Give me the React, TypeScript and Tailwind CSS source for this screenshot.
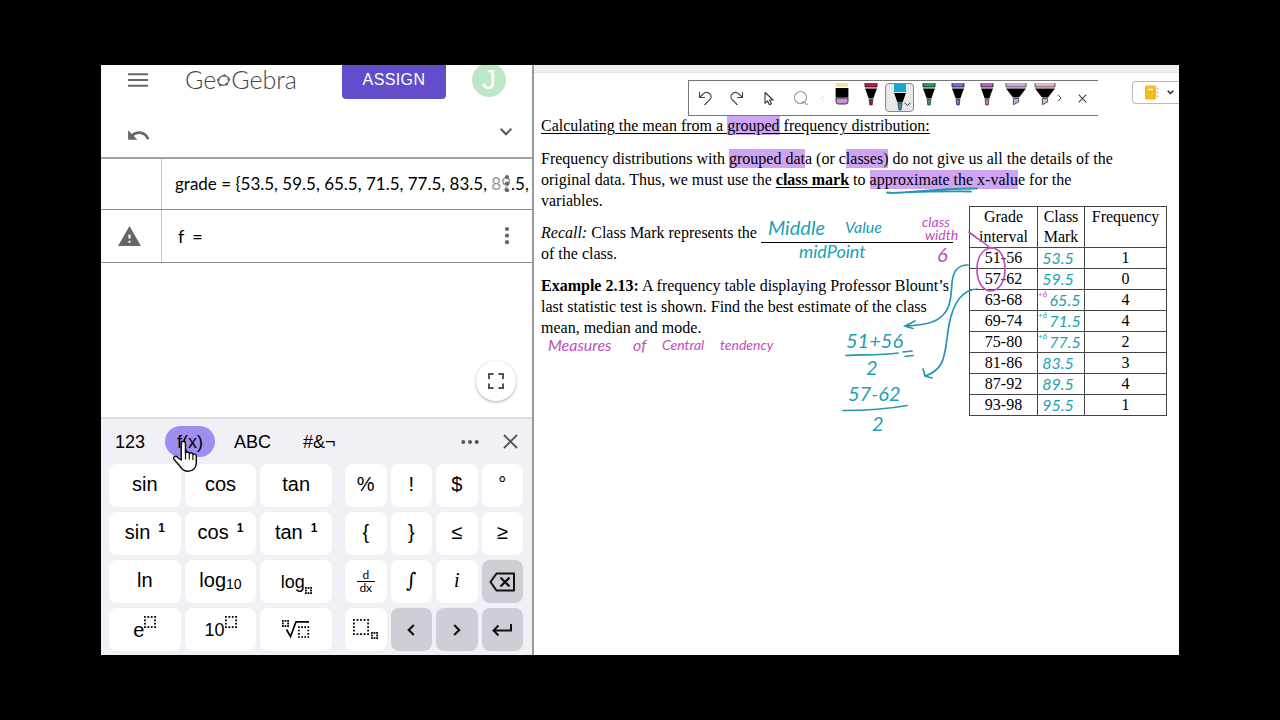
import React from "react";

const MATH = "font-['Lato','Open_Sans',sans-serif]";

const intervals: { range: string; mark: string; step?: string; stepPink?: boolean; freq: number }[] = [
  { range: "51-56", mark: "53.5", freq: 1 },
  { range: "57-62", mark: "59.5", freq: 0 },
  { range: "63-68", mark: "65.5", step: "+6", stepPink: true, freq: 4 },
  { range: "69-74", mark: "71.5", step: "+6", freq: 4 },
  { range: "75-80", mark: "77.5", step: "+6", freq: 2 },
  { range: "81-86", mark: "83.5", freq: 3 },
  { range: "87-92", mark: "89.5", freq: 4 },
  { range: "93-98", mark: "95.5", freq: 1 },
];

function DotBox({ className, size, count }: { className?: string; size: number; count: number }) {
  const pitch = (size - 1.8) / (count - 1);
  const dots: [number, number][] = [];
  for (let i = 0; i < count; i++) {
    for (let j = 0; j < count; j++) {
      if (i === 0 || j === 0 || i === count - 1 || j === count - 1) dots.push([i * pitch, j * pitch]);
    }
  }
  return (
    <svg width={size} height={size} viewBox={`0 0 ${size} ${size}`} className={className} fill="#000" aria-hidden="true">
      {dots.map(([x, y]) => (
        <rect key={`${x}-${y}`} x={x} y={y} width="1.8" height="1.8" />
      ))}
    </svg>
  );
}

function Key({ label, children, dark }: { label: string; children: React.ReactNode; dark?: boolean }) {
  return (
    <button
      type="button"
      aria-label={label}
      className={
        dark
          ? "flex h-[43px] items-center justify-center rounded-lg bg-[#cfcdd6] text-xl text-black"
          : "flex h-[43px] items-center justify-center rounded-lg bg-white pb-1 text-xl text-black"
      }
    >
      {children}
    </button>
  );
}

function Inverse({ name }: { name: string }) {
  return (
    <span className="flex">
      {name}
      <sup className="top-0 ml-2 text-xs font-bold leading-5">1</sup>
    </span>
  );
}

function Dots() {
  return (
    <svg width="6" height="20" viewBox="0 0 6 20" fill="#666" aria-hidden="true">
      <circle cx="3" cy="3" r="2.1" />
      <circle cx="3" cy="9.6" r="2.1" />
      <circle cx="3" cy="16.2" r="2.1" />
    </svg>
  );
}

function GeoGebraPanel() {
  return (
    <section className="flex w-[433px] shrink-0 flex-col overflow-hidden border-r-2 border-[#98979c] bg-white font-['Liberation_Sans',sans-serif]">
      <header className="flex h-[29px] items-center">
        <button type="button" aria-label="Menu" className="ml-[27px]">
          <svg width="20" height="14" viewBox="0 0 20 14" stroke="#666" strokeWidth="1.9" aria-hidden="true">
            <path d="M0 1.2h20M0 7h20M0 12.8h20" />
          </svg>
        </button>
        <div className="ml-[37px] flex w-[120px] items-center pb-0.5 font-['Lato',sans-serif] text-[25px] leading-7 font-light text-[#444]">
          Ge
          <svg width="15" height="15" viewBox="0 0 15 15" className="mt-1" role="img" aria-label="o">
            <ellipse cx="7.5" cy="7.5" rx="5.6" ry="4.6" transform="rotate(-25 7.5 7.5)" fill="none" stroke="#666" strokeWidth="1.3" />
            <g fill="#778" stroke="#444" strokeWidth="0.5">
              <circle cx="8.5" cy="2.6" r="1.1" />
              <circle cx="12.8" cy="6.4" r="1.1" />
              <circle cx="10.6" cy="11.2" r="1.1" />
              <circle cx="4.4" cy="12" r="1.1" />
              <circle cx="2.4" cy="6.8" r="1.1" />
            </g>
          </svg>
          Gebra
        </div>
        <button
          type="button"
          className="ml-[37px] h-[34px] w-[104px] self-start rounded-b bg-[#644dcb] pb-1 text-base tracking-wide text-white"
        >
          ASSIGN
        </button>
        <div className="ml-[26px] flex size-[34px] shrink-0 items-center justify-center rounded-full bg-[#bde8c8] text-[28px] leading-7 text-white">
          J
        </div>
      </header>
      <div className="flex h-[65px] items-center justify-between border-b-2 border-[#a3a3a3] pr-5 pl-[25px]">
        <button type="button" aria-label="Undo" className="pt-5">
          <svg width="25" height="25" viewBox="0 0 24 24" fill="#666" aria-hidden="true">
            <path d="M12.5 8c-2.65 0-5.05.99-6.9 2.6L2 7v9h9l-3.62-3.62c1.39-1.16 3.16-1.88 5.12-1.88 3.54 0 6.55 2.31 7.6 5.5l2.37-.78C21.08 11.03 17.15 8 12.5 8z" />
          </svg>
        </button>
        <button type="button" aria-label="Collapse" className="pt-3">
          <svg width="12" height="8" viewBox="0 0 12 8" fill="none" stroke="#555" strokeWidth="2" aria-hidden="true">
            <path d="M0.7 0.8 6 6.2 11.3 0.8" />
          </svg>
        </button>
      </div>
      <div className="flex h-[51px] border-b border-[#8c8aae]">
        <div className="w-[61px] shrink-0 border-r border-[#c4c3cc]" />
        <div className={`relative flex flex-1 items-center overflow-hidden pl-[13px] text-[17px] whitespace-nowrap text-black ${MATH}`}>
          <span>
            grade = {"{"}53.5, 59.5, 65.5, 71.5, 77.5, 83.5, <span className="text-[#999]">89</span>.5,
          </span>
          <button type="button" aria-label="More" className="absolute right-[22px]">
            <Dots />
          </button>
        </div>
      </div>
      <div className="flex h-[53px] border-b border-[#8b8b90]">
        <div className="flex w-[61px] shrink-0 items-center justify-center border-r border-[#c4c3cc] pr-1">
          <svg width="25" height="25" viewBox="0 0 24 24" fill="#666" aria-hidden="true">
            <path d="M1 21h22L12 2 1 21zm12-3h-2v-2h2v2zm0-4h-2v-4h2v4z" />
          </svg>
        </div>
        <div className={`flex flex-1 items-center justify-between pr-[22px] pl-4 text-lg text-black ${MATH}`}>
          <span className="flex gap-2">
            <span>f</span>
            <span>=</span>
          </span>
          <button type="button" aria-label="More">
            <Dots />
          </button>
        </div>
      </div>
      <div className="flex flex-1 items-end justify-end pr-4 pb-4">
        <button
          type="button"
          aria-label="Fullscreen"
          className="flex size-10 items-center justify-center rounded-full bg-white shadow-[0_1px_3px_rgba(0,0,0,0.35)]"
        >
          <svg width="16" height="16" viewBox="0 0 16 16" fill="none" stroke="#555" strokeWidth="2" aria-hidden="true">
            <path d="M1 6V1h4.500M10.500 1H15v5M15 10.500V15h-4.500M5.500 15H1v-4.500" />
          </svg>
        </button>
      </div>
      <Keyboard />
    </section>
  );
}

function Keyboard() {
  return (
    <div className="border-t-2 border-[#dedde2] bg-[#f1f0f6] pr-[9px] pb-1 pl-2">
      <div className="flex h-[45px] items-center text-lg text-black">
        <button type="button" className="w-[42px] text-center">123</button>
        <div className="relative ml-[14px]">
          <button type="button" className="h-[31px] w-[50px] rounded-full bg-[#a08df0]">f(x)</button>
          <svg width="27" height="33" viewBox="0 0 27 33" className="absolute top-3.5 left-[7px]" aria-hidden="true">
            <path
              d="M9.200 20V3.500c0-3 4.300-3 4.300 0V13c.4-1.600 3.700-1.400 3.800.6.600-1.300 3.500-1 3.600.9.700-1 3.400-.6 3.400 1.600v6.400c0 5-3 8.700-8.300 8.700-4.600 0-6.500-2.400-8.300-5.400L2 19.500c-1.500-2.600 1.700-4.300 3.600-2.200z"
              fill="white"
              stroke="#111"
              strokeWidth="1.500"
              strokeLinejoin="round"
            />
            <path d="M13.500 13v6.500M17.300 14v5.500M20.900 15v5" stroke="#111" strokeWidth="1.200" />
          </svg>
        </div>
        <button type="button" className="ml-[19px]">ABC</button>
        <button type="button" className="ml-8">#&amp;¬</button>
        <button type="button" aria-label="More keyboards" className="ml-auto">
          <svg width="18" height="6" viewBox="0 0 18 6" fill="#555" aria-hidden="true">
            <circle cx="2.300" cy="3" r="2" />
            <circle cx="9" cy="3" r="2" />
            <circle cx="15.700" cy="3" r="2" />
          </svg>
        </button>
        <button type="button" aria-label="Close keyboard" className="mr-[5px] ml-6">
          <svg width="15" height="15" viewBox="0 0 15 15" stroke="#555" strokeWidth="1.800" aria-hidden="true">
            <path d="M1 1l13 13M14 1 1 14" />
          </svg>
        </button>
      </div>
      <div className="flex gap-[13px]">
        <div className="grid flex-[223] grid-cols-3 gap-x-1 gap-y-[5px]">
          <Key label="sin">sin</Key>
          <Key label="cos">cos</Key>
          <Key label="tan">tan</Key>
          <Key label="inverse sin"><Inverse name="sin" /></Key>
          <Key label="inverse cos"><Inverse name="cos" /></Key>
          <Key label="inverse tan"><Inverse name="tan" /></Key>
          <Key label="ln">ln</Key>
          <Key label="log base 10">
            <span className="flex items-end leading-6">
              log<span className="text-sm leading-4">10</span>
            </span>
          </Key>
          <Key label="log base b">
            <span className="flex items-end pt-1 text-lg leading-6">
              log
              <DotBox size={7} count={3} />
            </span>
          </Key>
          <Key label="e to the power">
            <span className="flex items-start pt-1 leading-8">
              e
              <DotBox size={12} count={4} className="mt-0.5" />
            </span>
          </Key>
          <Key label="10 to the power">
            <span className="flex items-start pt-1 text-lg leading-8">
              10
              <DotBox size={12} count={4} className="mt-0.5" />
            </span>
          </Key>
          <Key label="nth root">
            <span className="flex items-start pt-1">
              <DotBox size={7} count={3} />
              <span className="-ml-1 flex">
                <svg width="25" height="19" viewBox="0 0 25 19" fill="none" stroke="#000" strokeWidth="1.700" aria-hidden="true">
                  <path d="M1.500 9.500 5.500 16.500 11 1.800h13" />
                  <path d="M13 7.200h11.200M13 17h11.200M13 10.500h1.800M13 13.800h1.800M22.400 10.500h1.800M22.400 13.800h1.800" strokeDasharray="1.800 1.350" />
                </svg>
              </span>
            </span>
          </Key>
        </div>
        <div className="grid flex-[178] grid-cols-4 gap-x-1 gap-y-[5px]">
          <Key label="percent">%</Key>
          <Key label="factorial">!</Key>
          <Key label="dollar">$</Key>
          <Key label="degree">°</Key>
          <Key label="open brace">{"{"}</Key>
          <Key label="close brace">{"}"}</Key>
          <Key label="less than or equal">≤</Key>
          <Key label="greater than or equal">≥</Key>
          <Key label="derivative">
            <span className="flex flex-col items-center pt-1 font-['Lato',sans-serif] text-xs leading-3">
              <span className="w-[18px] border-b border-black text-center">d</span>
              <span>dx</span>
            </span>
          </Key>
          <Key label="integral"><span className="font-['DejaVu_Serif',serif]">∫</span></Key>
          <Key label="imaginary unit"><span className="font-['Liberation_Serif',serif] italic">i</span></Key>
          <Key label="backspace" dark>
            <svg width="26" height="20" viewBox="0 0 26 20" fill="none" stroke="#111" strokeWidth="2" strokeLinejoin="round" aria-hidden="true">
              <path d="M7.500 1.500H25v17H7.500L1.500 10z" />
              <path d="m11.500 5.500 9 9M20.500 5.500l-9 9" strokeWidth="2.300" />
            </svg>
          </Key>
          <Key label="subscript">
            <span className="flex items-end pt-2">
              <DotBox size={16} count={5} className="mb-2.5" />
              <DotBox size={7} count={3} className="mb-1.5 ml-0.5" />
            </span>
          </Key>
          <Key label="left" dark>
            <svg width="8" height="12" viewBox="0 0 8 12" fill="none" stroke="#111" strokeWidth="2.200" aria-hidden="true">
              <path d="M6.800 1 1.800 6l5 5" />
            </svg>
          </Key>
          <Key label="right" dark>
            <svg width="8" height="12" viewBox="0 0 8 12" fill="none" stroke="#111" strokeWidth="2.200" aria-hidden="true">
              <path d="m1.200 1 5 5-5 5" />
            </svg>
          </Key>
          <Key label="enter" dark>
            <svg width="22" height="14" viewBox="0 0 22 14" fill="none" stroke="#111" strokeWidth="2" aria-hidden="true">
              <path d="M20 1v6.500H2.500M7.500 2.500l-5 5 5 5" />
            </svg>
          </Key>
        </div>
      </div>
    </div>
  );
}

function Pen({ color, tip }: { color: string; tip: string }) {
  return (
    <svg width="14" height="23" viewBox="0 0 14 23" aria-hidden="true">
      <path d="M1 0v4h12V0" fill={color} stroke="#111" strokeWidth="0.800" />
      <path d="M1 5.500h12L9.300 15.500H4.700z" fill="#000" />
      <path d="M5.100 16.500h3.800L8.200 22H5.800z" fill={tip} stroke="#222" strokeWidth="0.700" />
    </svg>
  );
}

function Highlighter({ color }: { color: string }) {
  return (
    <svg width="22" height="23" viewBox="0 0 22 23" aria-hidden="true">
      <path d="M1 0v4h20V0" fill={color} stroke="#333" strokeWidth="0.800" />
      <path d="M1 5.500h20L14 14.500H8z" fill="#000" />
      <path d="M8.400 15.500h5.200v3.500l-5.200 2.700z" fill={color} stroke="#333" strokeWidth="0.800" />
    </svg>
  );
}

function ToolButton({ label, children }: { label: string; children: React.ReactNode }) {
  return (
    <button type="button" aria-label={label} className="flex w-8 items-center justify-center">
      {children}
    </button>
  );
}

function PenButton({ label, children }: { label: string; children: React.ReactNode }) {
  return (
    <button type="button" aria-label={label} className="flex w-[29px] items-start justify-center pt-0.5">
      {children}
    </button>
  );
}

function InkToolbar() {
  return (
    <div className="flex justify-end">
      <div className="mt-[7px] flex h-9 border-y border-l border-[#777]" role="toolbar">
        <ToolButton label="Undo">
          <svg width="14" height="15" viewBox="0 0 14 15" fill="none" stroke="#444" strokeWidth="1.100" aria-hidden="true">
            <path d="M1.500 1v5.500H7M1.500 6.500 5 3c4.500-4 10.300 1 7 5.300L6.500 14" />
          </svg>
        </ToolButton>
        <ToolButton label="Redo">
          <svg width="14" height="15" viewBox="0 0 14 15" fill="none" stroke="#444" strokeWidth="1.100" aria-hidden="true">
            <path d="M12.500 1v5.500H7M12.500 6.500 9 3C4.500-1-1.300 4 2 8.300L7.500 14" />
          </svg>
        </ToolButton>
        <ToolButton label="Select">
          <svg width="12" height="15" viewBox="0 0 12 15" fill="none" stroke="#333" strokeWidth="1.100" strokeLinejoin="round" aria-hidden="true">
            <path d="M2 1.500v10.800l2.600-2.400 1.800 3.800 2-1-1.800-3.700h3.600z" />
          </svg>
        </ToolButton>
        <ToolButton label="Lasso">
          <svg width="16" height="16" viewBox="0 0 16 16" fill="none" stroke="#999" strokeWidth="1.100" aria-hidden="true">
            <circle cx="7.500" cy="7.500" r="6" />
            <path d="M8 13.500c1-2.600 3.400-2.500 4-.5.500 1.500 2 1.500 3 1" />
          </svg>
        </ToolButton>
        <button type="button" aria-label="Previous pens" className="flex w-2.5 items-center justify-center">
          <svg width="5" height="7" viewBox="0 0 5 7" fill="none" stroke="#ddd" aria-hidden="true">
            <path d="M4 .5 1 3.500l3 3" />
          </svg>
        </button>
        <PenButton label="Eraser">
          <svg width="14" height="22" viewBox="0 0 14 22" aria-hidden="true">
            <path d="M1 0h12v4H1z" fill="#f3e0a0" />
            <path d="M1 15h12v3.500a2.500 2.500 0 0 1-2.500 2.500h-7A2.500 2.500 0 0 1 1 18.500z" fill="#c890d8" stroke="#222" strokeWidth="0.900" />
            <path d="M.6 5h12.800v9.500H.6z" fill="#000" />
          </svg>
        </PenButton>
        <PenButton label="Red pen"><Pen color="#c2185b" tip="#a01848" /></PenButton>
        <button type="button" aria-label="Blue pen" className="relative mt-0.5 flex h-[29px] w-[29px] justify-center rounded border border-[#888] bg-[#e8e8e8]">
          <svg width="14" height="27" viewBox="0 0 14 27" aria-hidden="true">
            <path d="M1 0h12v8H1z" fill="#18a6cc" />
            <path d="M1 9h12L9.500 18.500h-5z" fill="#000" />
            <path d="M5 19.500h4L8 26H6z" fill="#2aa0bd" stroke="#222" strokeWidth="0.700" />
          </svg>
          <svg width="7" height="5" viewBox="0 0 7 5" className="absolute right-0.5 bottom-1" fill="none" stroke="#333" aria-hidden="true">
            <path d="m.5.7 3 3 3-3" />
          </svg>
        </button>
        <PenButton label="Green pen"><Pen color="#2e9b57" tip="#3c9c60" /></PenButton>
        <PenButton label="Indigo pen"><Pen color="#7a6bd0" tip="#7a6bd0" /></PenButton>
        <PenButton label="Magenta pen"><Pen color="#c45cc4" tip="#c878b8" /></PenButton>
        <PenButton label="Purple highlighter"><Highlighter color="#cba6e6" /></PenButton>
        <PenButton label="Pink highlighter"><Highlighter color="#ecaec8" /></PenButton>
        <button type="button" aria-label="Next pens" className="-ml-1 flex w-2 items-center justify-center">
          <svg width="5" height="8" viewBox="0 0 5 8" fill="none" stroke="#444" aria-hidden="true">
            <path d="m1 .8 3 3.200-3 3.200" />
          </svg>
        </button>
        <button type="button" aria-label="Close toolbar" className="flex w-[35px] items-center justify-center pl-1">
          <svg width="9" height="9" viewBox="0 0 9 9" stroke="#444" strokeWidth="1.100" aria-hidden="true">
            <path d="m.7.700 7.600 7.600M8.300.7.700 8.300" />
          </svg>
        </button>
      </div>
      <button
        type="button"
        aria-label="Notebook"
        className="mt-2 ml-[34px] flex h-[23px] w-[47px] items-center rounded-l border border-r-0 border-[#bbb] bg-white pl-3"
      >
        <svg width="14" height="15" viewBox="0 0 14 15" aria-hidden="true">
          <rect x="0" y="0.500" width="11" height="14" rx="1.500" fill="#f3bb1c" />
          <path d="M3 4.500h5" stroke="#fff" strokeWidth="1.500" />
          <path d="M12.500 2.500v2M12.500 6.500v2M12.500 10.500v2" stroke="#f3bb1c" strokeWidth="1.500" />
        </svg>
        <svg width="7" height="5" viewBox="0 0 7 5" className="ml-2" fill="none" stroke="#222" strokeWidth="1.500" aria-hidden="true">
          <path d="m.7.700 2.800 2.800L6.300.7" />
        </svg>
      </button>
    </div>
  );
}

function Mark({ children }: { children: React.ReactNode }) {
  return <mark className="bg-[#cfa5f3] py-px text-black">{children}</mark>;
}

function FrequencyTable() {
  return (
    <table className="-mt-[5px] mr-3 w-[198px] shrink-0 border-collapse text-center leading-5">
      <thead>
        <tr className="align-top">
          <th className="w-[68px] border border-[#444] p-0 font-normal">Grade interval</th>
          <th className="w-[47px] border border-[#444] p-0 font-normal">Class Mark</th>
          <th className="border border-[#444] p-0 font-normal">Frequency</th>
        </tr>
      </thead>
      <tbody>
        {intervals.map((row) => (
          <tr key={row.range}>
            <td className="border border-[#444] p-0">{row.range}</td>
            <td className="relative border border-[#444] p-0 font-['Lato',sans-serif] text-[#1a9fb5] italic">
              {row.step && (
                <span
                  className={
                    row.stepPink
                      ? "absolute top-0 left-0 text-[8px] leading-[9px] text-[#c44cc0]"
                      : "absolute top-0 left-0 text-[8px] leading-[9px]"
                  }
                >
                  {row.step}
                </span>
              )}
              <span className={row.step ? "pl-2" : "pr-1.5"}>{row.mark}</span>
            </td>
            <td className="border border-[#444] p-0">{row.freq}</td>
          </tr>
        ))}
      </tbody>
    </table>
  );
}

function InkLayer() {
  return (
    <div className="pointer-events-none absolute top-0 left-0 font-['Lato',sans-serif] whitespace-nowrap text-[#1a9fb5] italic">
      <svg width="645" height="590" viewBox="534 65 645 590" fill="none" stroke="#2497b0" strokeWidth="1.700" strokeLinecap="round" aria-hidden="true">
        <path d="M887 192.500c16 2 40-4 90-4M891 193c26-1 50-2 80-1.500" strokeWidth="1.800" />
        <path d="M968 265c-12 0-15 8-16 18-1 12-1 24-9 32-8 9-22 10-38 11M915 321l-10 5 8 2.500" />
        <path d="M977 289c-15 1-24 14-28 36-3 17-3 31-8 39-4 7-10 10-16 12M923 369l2 7 7 2" />
        <path d="M846 355.500c18-1 34 0 52-2.500M843 410.500c22 0 42-1 64-5M903 352l9-1M905 356.500l8-1" />
        <g stroke="#c44cc0">
          <path d="M990 248c-9 2-13 11-13 22 0 12 6 21 14 21 9-1 14-10 14-22 0-13-6-22-15-21z" />
          <path d="M969 232c7 6 15 10 21 16" />
        </g>
      </svg>
      <span className="absolute top-[152px] left-[234px] text-xl leading-5">Middle</span>
      <span className="absolute top-[152px] left-[311px] text-base leading-5">Value</span>
      <span className="absolute top-[176px] left-[265px] text-lg leading-5">midPoint</span>
      <span className="absolute top-[265px] left-[312px] text-xl leading-5">51+56</span>
      <span className="absolute top-[292px] left-[332px] text-xl leading-5">2</span>
      <span className="absolute top-[318px] left-[314px] text-xl leading-5">57-62</span>
      <span className="absolute top-[348px] left-[338px] text-xl leading-5">2</span>
      <div className="text-[#c44cc0]">
        <span className="absolute top-[151px] left-[388px] text-sm leading-3">class</span>
        <span className="absolute top-[164px] left-[391px] text-sm leading-3">width</span>
        <span className="absolute top-[179px] left-[403px] text-xl leading-5">6</span>
        <span className="absolute top-[270px] left-[14px] text-base leading-5">Measures</span>
        <span className="absolute top-[270px] left-[99px] text-base leading-5">of</span>
        <span className="absolute top-[270px] left-[128px] text-sm leading-5">Central</span>
        <span className="absolute top-[270px] left-[186px] text-sm leading-5">tendency</span>
      </div>
    </div>
  );
}

function DocumentPanel() {
  return (
    <main className="relative min-w-0 flex-1 overflow-hidden bg-white font-['Liberation_Serif',serif] text-base leading-[21px] text-black">
      <div className="h-2 border-b border-[#e2e2e2] bg-[#eeeeee]" />
      <InkToolbar />
      <article className="pl-[7px]">
        <h1 className="leading-[19px] underline underline-offset-2">
          Calculating the mean from a <Mark>grouped</Mark> frequency distribution:
        </h1>
        <p className="mt-[13px]">
          Frequency distributions with <Mark>grouped dat</Mark>a (or c<Mark>lasses)</Mark> do not give us all the details of the
          <br />
          original data. Thus, we must use the <b className="underline underline-offset-2">class mark</b> to{" "}
          <Mark>approximate the x-valu</Mark>e for the
          <br />
          variables.
        </p>
        <div className="flex justify-between">
          <div className="pt-[11px] whitespace-nowrap">
            <p>
              <i>Recall:</i> Class Mark represents the{" "}
              <span className="inline-block h-4 w-[192px] border-b border-black align-bottom" />
              <br />
              of the class.
            </p>
            <p className="mt-[11px]">
              <b>Example 2.13:</b> A frequency table displaying Professor Blount’s
              <br />
              last statistic test is shown. Find the best estimate of the class
              <br />
              mean, median and mode.
            </p>
          </div>
          <FrequencyTable />
        </div>
      </article>
      <InkLayer />
    </main>
  );
}

export default function App() {
  return (
    <div className="flex min-h-screen bg-black px-[101px] py-[65px]">
      <GeoGebraPanel />
      <DocumentPanel />
    </div>
  );
}
